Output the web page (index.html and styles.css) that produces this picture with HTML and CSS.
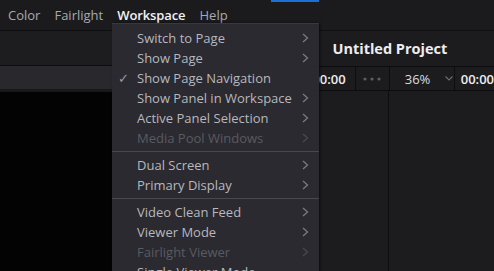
FILE: index.html
```html
<!DOCTYPE html>
<html lang="en">
<head>
    <meta charset="utf-8" />
    <title>Workspace menu</title>
    <link rel="stylesheet" href="styles.css">
</head>
<body>
    <div class="menubar">
        <span class="menubar-item">Color</span>
        <span class="menubar-item">Fairlight</span>
        <span class="menubar-item active">Workspace</span>
        <span class="menubar-item">Help</span>
        <div class="tab-indicator"></div>
    </div>

    <div class="workspace">
        <div class="left-pane">
            <div class="left-top"></div>
            <div class="left-sub"></div>
            <div class="viewer"></div>
        </div>
        <div class="right-pane">
            <div class="title-bar">Untitled Project</div>
            <div class="toolbar">
                <div class="cell timecode-left">00:00</div>
                <div class="cell dots">
                    <svg width="18" height="4" viewBox="0 0 18 4"><circle cx="2" cy="2" r="1.6" fill="#5c5c62"/><circle cx="9" cy="2" r="1.6" fill="#5c5c62"/><circle cx="16" cy="2" r="1.6" fill="#5c5c62"/></svg>
                </div>
                <div class="cell zoom">
                    <span>36%</span>
                    <svg width="8" height="5" viewBox="0 0 8 5"><path d="M0.5 0.5 L4 4 L7.5 0.5" fill="none" stroke="#6e6e74" stroke-width="1.1"/></svg>
                </div>
                <div class="cell timecode-right">00:00</div>
            </div>
            <div class="panes">
                <div class="pane pane-a"></div>
                <div class="pane pane-b"></div>
            </div>
        </div>
    </div>

    <div class="dropdown">
        <div class="item"><span class="label">Switch to Page</span><svg class="arrow" viewBox="0 0 7 10"><path d="M1 1 L5.5 5 L1 9"/></svg></div>
        <div class="item"><span class="label">Show Page</span><svg class="arrow" viewBox="0 0 7 10"><path d="M1 1 L5.5 5 L1 9"/></svg></div>
        <div class="item"><span class="check">&#x2713;</span><span class="label">Show Page Navigation</span></div>
        <div class="item"><span class="label">Show Panel in Workspace</span><svg class="arrow" viewBox="0 0 7 10"><path d="M1 1 L5.5 5 L1 9"/></svg></div>
        <div class="item"><span class="label">Active Panel Selection</span><svg class="arrow" viewBox="0 0 7 10"><path d="M1 1 L5.5 5 L1 9"/></svg></div>
        <div class="item disabled"><span class="label">Media Pool Windows</span><svg class="arrow" viewBox="0 0 7 10"><path d="M1 1 L5.5 5 L1 9"/></svg></div>
        <div class="separator"></div>
        <div class="item"><span class="label">Dual Screen</span><svg class="arrow" viewBox="0 0 7 10"><path d="M1 1 L5.5 5 L1 9"/></svg></div>
        <div class="item"><span class="label">Primary Display</span><svg class="arrow" viewBox="0 0 7 10"><path d="M1 1 L5.5 5 L1 9"/></svg></div>
        <div class="separator"></div>
        <div class="item"><span class="label">Video Clean Feed</span><svg class="arrow" viewBox="0 0 7 10"><path d="M1 1 L5.5 5 L1 9"/></svg></div>
        <div class="item"><span class="label">Viewer Mode</span><svg class="arrow" viewBox="0 0 7 10"><path d="M1 1 L5.5 5 L1 9"/></svg></div>
        <div class="item disabled"><span class="label">Fairlight Viewer</span><svg class="arrow" viewBox="0 0 7 10"><path d="M1 1 L5.5 5 L1 9"/></svg></div>
        <div class="item"><span class="label">Single Viewer Mode</span></div>
    </div>
</body>
</html>
```

FILE: styles.css
```css
* {
    margin: 0;
    padding: 0;
    box-sizing: border-box;
}

html, body {
    width: 494px;
    height: 271px;
    overflow: hidden;
}

body {
    font-family: "Open Sans", "Noto Sans", sans-serif;
    font-size: 13px;
    background: #1c1c1f;
    color: #c4c4c8;
    position: relative;
}

.menubar {
    height: 31px;
    display: flex;
    align-items: center;
    padding: 0 0 0 8px;
    gap: 14px;
    background: #1b1b1e;
    border-bottom: 1px solid #0f0f11;
    position: relative;
}

.menubar-item {
    color: #a9a9ae;
    line-height: 30px;
}

.menubar-item.active {
    color: #f2f2f4;
    font-weight: 600;
    letter-spacing: -0.1px;
}

.tab-indicator {
    position: absolute;
    top: 0;
    left: 271px;
    width: 48px;
    height: 2px;
    background: #1a6fd8;
}

.workspace {
    display: flex;
    height: 240px;
}

.left-pane {
    width: 288px;
    display: flex;
    flex-direction: column;
}

.left-top {
    height: 35px;
    background: #1d1d20;
    border-bottom: 1px solid #0d0d0f;
}

.left-sub {
    height: 26px;
    background: #28282d;
    border-bottom: 3px solid #18181a;
}

.viewer {
    flex: 1;
    background: #030303;
}

.right-pane {
    flex: 1;
    display: flex;
    flex-direction: column;
}

.title-bar {
    height: 36px;
    display: flex;
    align-items: center;
    justify-content: center;
    font-size: 14.5px;
    font-weight: 700;
    color: #eeeef0;
    background: #1c1c1f;
    border-bottom: 1px solid #0d0d0f;
    padding-bottom: 1px;
}

.toolbar {
    height: 24px;
    display: flex;
    background: #1c1c1f;
    border-bottom: 1px solid #0d0d0f;
}

.cell {
    display: flex;
    align-items: center;
    border-right: 1px solid #0d0d0f;
    color: #eeeef0;
    font-weight: 600;
}

.timecode-left {
    width: 70px;
    justify-content: flex-end;
    padding-right: 9px;
}

.dots {
    width: 34px;
    justify-content: center;
}

.zoom {
    width: 65px;
    padding-left: 15px;
    gap: 15px;
    font-weight: 400;
    color: #dcdce0;
}

.timecode-right {
    flex: 1;
    border-right: none;
    padding-left: 6px;
}

.panes {
    flex: 1;
    display: flex;
}

.pane-a {
    width: 103px;
    background: #1c1c1f;
    border-right: 1px solid #0d0d0f;
}

.pane-b {
    flex: 1;
    background: #1c1c1f;
}

.dropdown {
    position: absolute;
    top: 23px;
    left: 112px;
    width: 207px;
    height: 260px;
    padding-top: 4px;
    background: #2a2a30;
    border-top: 1px solid #38383e;
    box-shadow: 1px 0 2px rgba(0, 0, 0, 0.6);
}

.item {
    height: 20px;
    display: flex;
    align-items: center;
    padding-left: 25px;
    padding-right: 10px;
    position: relative;
    color: #b8b8bd;
}

.item.disabled {
    color: #5a5a60;
}

.label {
    flex: 1;
}

.arrow {
    width: 7px;
    height: 10px;
    fill: none;
    stroke: #7a7a80;
    stroke-width: 1.3;
}

.item.disabled .arrow {
    stroke: #48484e;
}

.check {
    position: absolute;
    left: 6px;
    color: #9a9aa0;
    font-size: 13px;
}

.separator {
    height: 7px;
    display: flex;
    align-items: center;
}

.separator::after {
    content: "";
    display: block;
    width: 100%;
    height: 1px;
    background: #48484e;
}
```
